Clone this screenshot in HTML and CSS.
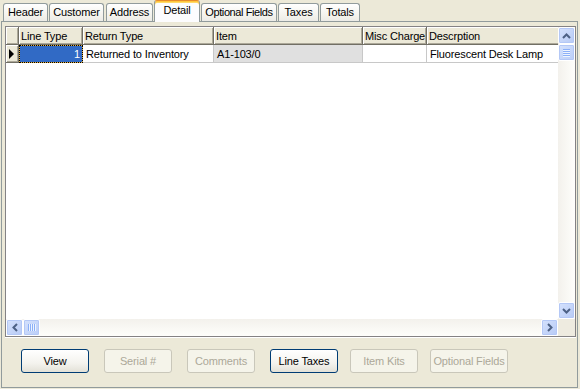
FILE: index.html
```html
<!DOCTYPE html>
<html>
<head>
<meta charset="utf-8">
<link rel="stylesheet" href="styles.css">
</head>
<body>
<div class="window">
  <div class="tabs">
    <div class="tab t-header">Header</div>
    <div class="tab t-customer">Customer</div>
    <div class="tab t-address">Address</div>
    <div class="tab active t-detail">Detail</div>
    <div class="tab t-optional">Optional Fields</div>
    <div class="tab t-taxes">Taxes</div>
    <div class="tab t-totals">Totals</div>
  </div>
  <div class="panel">
    <div class="grid-frame">
      <div class="grid-view">
        <table class="grid">
          <colgroup>
            <col class="c-sel"><col class="c-line"><col class="c-ret"><col class="c-item"><col class="c-misc"><col class="c-desc">
          </colgroup>
          <thead>
            <tr>
              <th class="rowhdr"></th>
              <th>Line Type</th>
              <th>Return Type</th>
              <th>Item</th>
              <th>Misc Charge</th>
              <th>Descrption</th>
            </tr>
          </thead>
          <tbody>
            <tr>
              <td class="rowhdr"><span class="pointer"></span></td>
              <td class="num selected">1</td>
              <td>Returned to Inventory</td>
              <td class="readonly">A1-103/0</td>
              <td></td>
              <td>Fluorescent Desk Lamp</td>
            </tr>
          </tbody>
        </table>
      </div>
      <div class="vscroll">
        <div class="sb-btn">
          <svg width="9" height="6" viewBox="0 0 9 6"><polyline points="1,5 4.5,1.5 8,5" fill="none" stroke="#4D6185" stroke-width="2"/></svg>
        </div>
        <div class="sb-thumb v">
          <span></span><span></span><span></span><span></span>
        </div>
        <div class="sb-track"></div>
        <div class="sb-btn">
          <svg width="9" height="6" viewBox="0 0 9 6"><polyline points="1,1 4.5,4.5 8,1" fill="none" stroke="#4D6185" stroke-width="2"/></svg>
        </div>
      </div>
      <div class="hscroll">
        <div class="sb-btn">
          <svg width="6" height="9" viewBox="0 0 6 9"><polyline points="5,1 1.5,4.5 5,8" fill="none" stroke="#4D6185" stroke-width="2"/></svg>
        </div>
        <div class="sb-thumb h">
          <span></span><span></span><span></span><span></span>
        </div>
        <div class="sb-track"></div>
        <div class="sb-btn">
          <svg width="6" height="9" viewBox="0 0 6 9"><polyline points="1,1 4.5,4.5 1,8" fill="none" stroke="#4D6185" stroke-width="2"/></svg>
        </div>
      </div>
      <div class="corner"></div>
    </div>
    <div class="buttons">
      <button class="btn">View</button>
      <button class="btn" disabled>Serial #</button>
      <button class="btn" disabled>Comments</button>
      <button class="btn">Line Taxes</button>
      <button class="btn narrow-gap" disabled>Item Kits</button>
      <button class="btn wide narrow-gap" disabled>Optional Fields</button>
    </div>
  </div>
</div>
</body>
</html>
```

FILE: styles.css
```css
* { box-sizing: border-box; }

html, body {
  margin: 0;
  padding: 0;
}

body {
  width: 580px;
  height: 389px;
  overflow: hidden;
  background: #ECE9D8;
  font-family: "Liberation Sans", Arial, sans-serif;
  font-size: 11px;
  letter-spacing: -0.15px;
  color: #000;
}

.window {
  display: flex;
  flex-direction: column;
}

/* Tabs */
.tabs {
  display: flex;
  align-items: flex-end;
  height: 21px;
  padding-left: 3px;
  position: relative;
  z-index: 2;
}

.tab {
  height: 18px;
  padding: 0;
  margin-right: 1px;
  line-height: 17px;
  text-align: center;
  border: 1px solid #919B9C;
  border-bottom: none;
  border-radius: 3px 3px 0 0;
  background: linear-gradient(#FFFFFF, #F3F2EC 70%, #ECEBE6);
  white-space: nowrap;
  overflow: hidden;
}

.t-header { width: 45px; }
.t-customer { width: 55px; margin-right: 2px; }
.t-address { width: 47px; }
.t-detail { width: 46px; }
.t-optional { width: 76px; letter-spacing: -0.4px; }
.t-taxes { width: 41px; }
.t-totals { width: 40px; }

.tab.active {
  height: 22px;
  margin-bottom: -1px;
  line-height: 18px;
  background: #FCFCFE;
  border-top: 1px solid #E68B2C;
  box-shadow: inset 0 1px 0 #FFC73C, inset 0 2px 0 #FFD96A;
}

/* Panel */
.panel {
  margin-left: 1px;
  width: 577px;
  height: 367px;
  border: 1px solid #919B9C;
  padding: 4px 1px 0 3px;
  display: flex;
  flex-direction: column;
}

.grid-frame {
  width: 571px;
  height: 311px;
  border: 1px solid #848284;
  background: #FFFFFF;
  display: grid;
  grid-template-columns: 1fr 17px;
  grid-template-rows: 1fr 17px;
}

.grid-view {
  overflow: hidden;
  background: #FFFFFF;
}

.grid {
  table-layout: fixed;
  border-collapse: separate;
  border-spacing: 0;
  width: 620px;
}

.c-sel { width: 13px; }
.c-line { width: 64px; }
.c-ret { width: 131px; }
.c-item { width: 149px; }
.c-misc { width: 64px; }
.c-desc { width: 199px; }

.grid th,
.grid td {
  height: 18px;
  padding: 0 3px;
  white-space: nowrap;
  overflow: hidden;
  text-align: left;
  font-weight: normal;
}

.grid th {
  background: #ECE9D8;
  border-right: 1px solid #716F64;
  border-bottom: 1px solid #716F64;
  box-shadow: inset 1px 1px 0 #FFFFFF, inset -1px -1px 0 #ACA899;
  padding-left: 2px;
}

.grid td {
  border-right: 1px solid #C8C8C8;
  border-bottom: 1px solid #C8C8C8;
}

.grid td.rowhdr {
  background: #ECE9D8;
  border-right: 1px solid #716F64;
  border-bottom: 1px solid #716F64;
  box-shadow: inset 1px 1px 0 #FFFFFF, inset -1px -1px 0 #ACA899;
  padding: 0;
}

.pointer {
  display: block;
  width: 0;
  height: 0;
  margin-left: 3px;
  border-top: 5px solid transparent;
  border-bottom: 5px solid transparent;
  border-left: 5px solid #000;
}

.grid td.num { text-align: right; }

.grid td.selected {
  color: #FFFFFF;
  border: 1px dotted #000;
  background: linear-gradient(#316AC5, #316AC5) padding-box, linear-gradient(#E3AE3E, #E3AE3E) border-box;
  padding-right: 2px;
}

.grid td.readonly {
  background: #E0E0E0;
}

/* Scrollbars */
.vscroll {
  display: flex;
  flex-direction: column;
  background: linear-gradient(90deg, #F3F1EC, #FEFEFB);
}

.hscroll {
  display: flex;
  flex-direction: row;
  background: linear-gradient(#F3F1EC, #FEFEFB);
}

.sb-btn {
  flex: 0 0 17px;
  width: 17px;
  height: 17px;
  border: 1px solid #FFFFFF;
  border-radius: 2px;
  background: linear-gradient(135deg, #D5E2FD, #B7CAF5);
  box-shadow: inset 0 0 0 1px #B4C8F6;
  display: flex;
  align-items: center;
  justify-content: center;
}

.sb-thumb {
  flex: 0 0 17px;
  width: 17px;
  height: 17px;
  border: 1px solid #FFFFFF;
  border-radius: 2px;
  background: linear-gradient(135deg, #D5E2FD, #BACDF7);
  box-shadow: inset 0 0 0 1px #B4C8F6;
  display: flex;
  align-items: center;
  justify-content: center;
  gap: 1px;
}

.sb-thumb.v { flex-direction: column; }
.sb-thumb.h { flex-direction: row; }

.sb-thumb.v span {
  width: 7px;
  height: 1px;
  background: #8CB0F8;
  box-shadow: 0 1px 0 #EEF4FE;
}

.sb-thumb.h span {
  width: 1px;
  height: 7px;
  background: #8CB0F8;
  box-shadow: 1px 0 0 #EEF4FE;
}

.sb-track { flex: 1 1 auto; }

.corner {
  background: #EEEBE0;
}

/* Buttons */
.buttons {
  display: flex;
  gap: 15px;
  padding: 11px 0 0 16px;
  border-top: 1px solid #FFFFFF;
}

.btn {
  width: 68px;
  height: 24px;
  padding: 0;
  font-family: "Liberation Sans", Arial, sans-serif;
  font-size: 11px;
  letter-spacing: -0.15px;
  color: #000;
  border: 1px solid #003C74;
  border-radius: 3px;
  background: linear-gradient(#FFFFFF, #F4F3EE 60%, #E3E1D7);
}

.btn:disabled {
  color: #ACA899;
  border-color: #C9C7BA;
  background: #F5F4EA;
}

.btn.narrow-gap { margin-left: -3px; }
.btn.wide { width: 78px; }
```
